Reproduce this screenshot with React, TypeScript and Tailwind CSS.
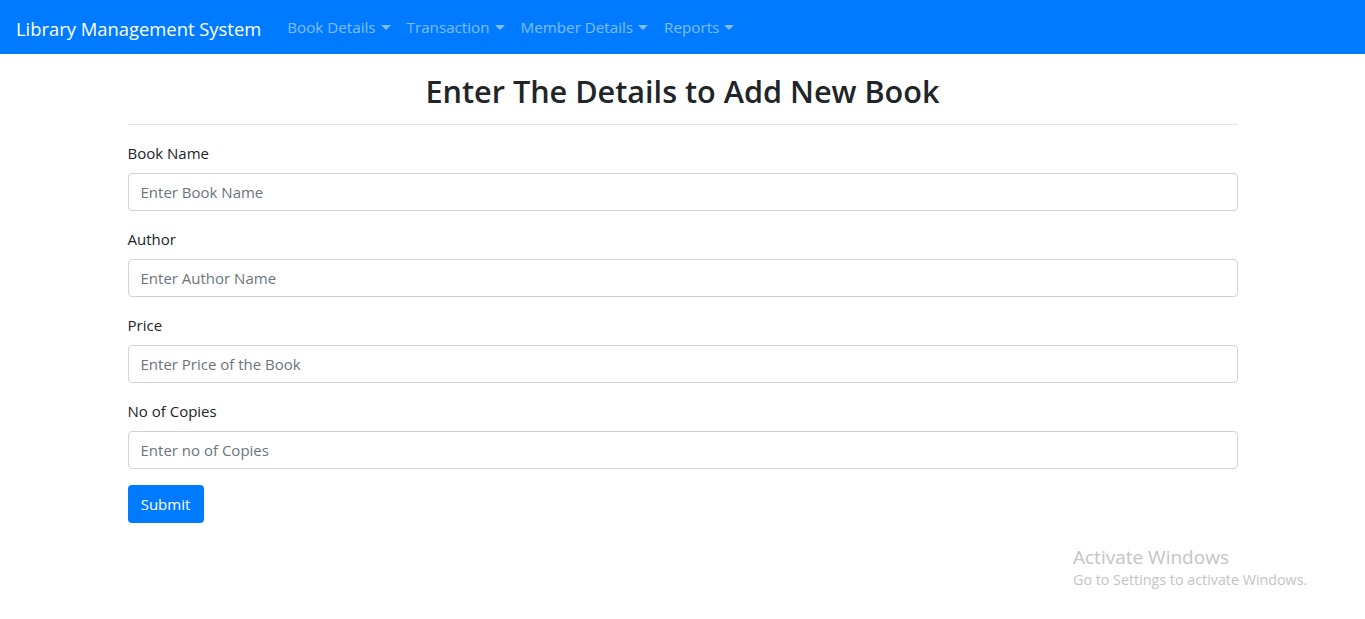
import React from "react";

const font = { fontFamily: '"Open Sans", "Noto Sans", sans-serif' };

function NavItem({ label }: { label: string }) {
  return (
    <a className="flex items-center px-2 text-[15.2px] text-white/50 cursor-pointer">
      <span>{label}</span>
      <span className="ml-[5px] inline-block w-0 h-0 border-l-[5px] border-r-[5px] border-t-[5px] border-l-transparent border-r-transparent border-t-white/50" />
    </a>
  );
}

function Field({ label, placeholder }: { label: string; placeholder: string }) {
  return (
    <div className="mb-4">
      <label className="block mb-2 text-[15px] leading-6 text-[#212529]">{label}</label>
      <input
        type="text"
        placeholder={placeholder}
        className="block w-full h-[38px] px-3 text-[15px] text-[#495057] placeholder:text-[#6c757d] bg-white border border-[#ced4da] rounded-[4px] outline-none"
      />
    </div>
  );
}

export default function App() {
  return (
    <div className="relative min-h-[619px] bg-white" style={font}>
      <nav className="h-[54px] bg-[#007bff] flex items-center pl-4 pr-4">
        <span className="text-[18.4px] text-white mr-[18px] pt-[3px]">Library Management System</span>
        <div className="flex items-center pt-[1px]">
          <NavItem label="Book Details" />
          <NavItem label="Transaction" />
          <NavItem label="Member Details" />
          <NavItem label="Reports" />
        </div>
      </nav>
      <main className="w-[1110px] mx-auto pt-[18px]">
        <h2 className="text-[30.6px] leading-[38px] font-semibold text-center text-[#212529]">
          Enter The Details to Add New Book
        </h2>
        <hr className="mt-[14px] mb-4 border-0 border-t border-black/10" />
        <form onSubmit={(e) => e.preventDefault()}>
          <Field label="Book Name" placeholder="Enter Book Name" />
          <Field label="Author" placeholder="Enter Author Name" />
          <Field label="Price" placeholder="Enter Price of the Book" />
          <Field label="No of Copies" placeholder="Enter no of Copies" />
          <button
            type="submit"
            className="h-[38px] w-[76px] bg-[#007bff] text-white text-[15px] rounded-[4px]"
          >
            Submit
          </button>
        </form>
      </main>
      <div className="absolute left-[1073px] top-[546px] text-[#c4c4c4] leading-tight">
        <div className="text-[19px]">Activate Windows</div>
        <div className="text-[14.3px] mt-[1px]">Go to Settings to activate Windows.</div>
      </div>
    </div>
  );
}
